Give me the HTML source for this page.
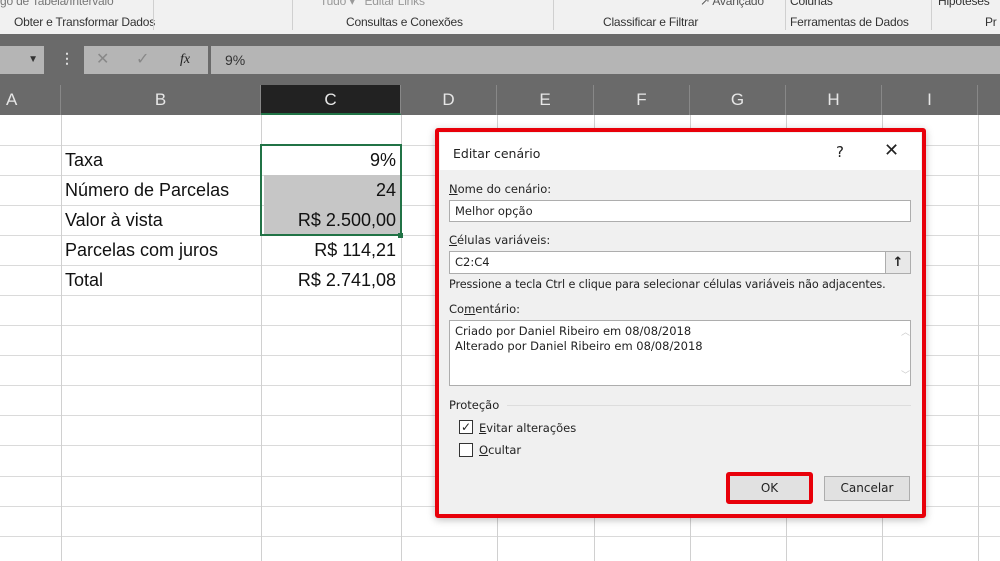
<!DOCTYPE html>
<html><head><meta charset="utf-8"><style>
*{margin:0;padding:0;box-sizing:border-box}
body{width:1000px;height:561px;overflow:hidden;position:relative;background:#fff;font-family:"Liberation Sans",sans-serif}
.a{position:absolute}
.rib{left:0;top:0;width:1000px;height:34px;background:#f1f1f1;font-size:12px;color:#333}
.rib span{position:absolute;top:15px;letter-spacing:-0.2px}
.vl{position:absolute;width:1px;background:#d0d0d0}
.hl{position:absolute;height:1px;background:#dadada;left:0;width:1000px}
.colh{position:absolute;top:85px;height:30px;color:#e6e6e6;font-size:17px;text-align:center;line-height:30px;border-right:1px solid #888}
.cell{position:absolute;font-size:18px;color:#111;height:30px;line-height:30px}
.dlg{font-family:"DejaVu Sans","Liberation Sans",sans-serif;font-size:11.5px;color:#222}
</style></head><body>
<div class="a rib">
<span style="left:0;top:-6px;color:#777">go de Tabela/Intervalo</span>
<span style="left:14px">Obter e Transformar Dados</span>
<span style="left:320px;top:-6px;color:#999">Tudo ▾ &nbsp; Editar Links</span>
<span style="left:346px">Consultas e Conexões</span>
<span style="left:603px">Classificar e Filtrar</span>
<span style="left:700px;top:-6px;color:#555">↗ Avançado</span>
<span style="left:790px;top:-6px">Colunas</span>
<span style="left:790px">Ferramentas de Dados</span>
<span style="left:938px;top:-6px">Hipóteses</span>
<span style="left:985px">Pr</span>
<div class="vl" style="left:153px;top:0;height:30px"></div>
<div class="vl" style="left:292px;top:0;height:30px"></div>
<div class="vl" style="left:553px;top:0;height:30px"></div>
<div class="vl" style="left:785px;top:0;height:30px"></div>
<div class="vl" style="left:931px;top:0;height:30px"></div>
</div>
<div class="a" style="left:0;top:34px;width:1000px;height:51px;background:#6a6a6a"></div>
<div class="a" style="left:0;top:46px;width:44px;height:28px;background:#b5b5b5;font-size:10px;color:#333;text-align:right;padding-right:6px;line-height:28px">▼</div>
<div class="a" style="left:60px;top:50px;color:#ddd;font-size:14px;font-weight:bold">⋮</div>
<div class="a" style="left:84px;top:46px;width:124px;height:28px;background:#b5b5b5;color:#888;font-size:16px;line-height:28px"><span style="position:absolute;left:12px">✕</span><span style="position:absolute;left:52px">✓</span><span style="position:absolute;left:96px;color:#222;font-style:italic;font-family:'Liberation Serif',serif;font-size:14px">fx</span></div>
<div class="a" style="left:211px;top:46px;width:789px;height:28px;background:#b5b5b5;font-size:14px;color:#333;line-height:28px;padding-left:14px">9%</div>
<div class="a" style="left:0;top:85px;width:1000px;height:30px;background:#6a6a6a"></div>
<div class="colh" style="left:0;width:61px;text-align:left;padding-left:6px">A</div>
<div class="colh" style="left:61px;width:200px">B</div>
<div class="colh" style="left:261px;width:140px;background:#222;border-bottom:2px solid #217346">C</div>
<div class="colh" style="left:401px;width:96px">D</div>
<div class="colh" style="left:497px;width:97px">E</div>
<div class="colh" style="left:594px;width:96px">F</div>
<div class="colh" style="left:690px;width:96px">G</div>
<div class="colh" style="left:786px;width:96px">H</div>
<div class="colh" style="left:882px;width:96px">I</div>
<div class="hl" style="top:145px"></div><div class="hl" style="top:175px"></div><div class="hl" style="top:205px"></div><div class="hl" style="top:235px"></div><div class="hl" style="top:265px"></div><div class="hl" style="top:295px"></div><div class="hl" style="top:325px"></div><div class="hl" style="top:355px"></div><div class="hl" style="top:385px"></div><div class="hl" style="top:415px"></div><div class="hl" style="top:445px"></div><div class="hl" style="top:476px"></div><div class="hl" style="top:506px"></div><div class="hl" style="top:536px"></div>
<div class="vl" style="left:61px;top:115px;height:446px"></div><div class="vl" style="left:261px;top:115px;height:446px"></div><div class="vl" style="left:401px;top:115px;height:446px"></div><div class="vl" style="left:497px;top:115px;height:446px"></div><div class="vl" style="left:594px;top:115px;height:446px"></div><div class="vl" style="left:690px;top:115px;height:446px"></div><div class="vl" style="left:786px;top:115px;height:446px"></div><div class="vl" style="left:882px;top:115px;height:446px"></div><div class="vl" style="left:978px;top:115px;height:446px"></div>
<div class="a" style="left:264px;top:175px;width:136px;height:60px;background:#c6c6c6"></div>
<div class="a" style="left:260px;top:144px;width:142px;height:92px;border:2px solid #217346"></div>
<div class="a" style="left:398px;top:233px;width:5px;height:5px;background:#217346"></div>
<div class="cell" style="left:65px;top:145px">Taxa</div>
<div class="cell" style="left:65px;top:175px">Número de Parcelas</div>
<div class="cell" style="left:65px;top:205px">Valor à vista</div>
<div class="cell" style="left:65px;top:235px">Parcelas com juros</div>
<div class="cell" style="left:65px;top:265px">Total</div>
<div class="cell" style="right:604px;top:145px">9%</div>
<div class="cell" style="right:604px;top:175px">24</div>
<div class="cell" style="right:604px;top:205px">R$ 2.500,00</div>
<div class="cell" style="right:604px;top:235px">R$ 114,21</div>
<div class="cell" style="right:604px;top:265px">R$ 2.741,08</div>
<div class="a dlg" style="left:435px;top:128px;width:491px;height:390px;border:4px solid #e8000a;border-radius:3px;background:#f0f0f0;box-shadow:0 2px 8px rgba(0,0,0,.25)">
 <div class="a" style="left:1px;top:1px;right:1px;height:37px;background:#fff"></div>
 <div class="a" style="left:14px;top:14px;font-size:12.5px">Editar cenário</div>
 <div class="a" style="left:397px;top:11px;font-size:15px">?</div>
 <div class="a" style="left:445px;top:8px;font-size:18px">✕</div>
 <div class="a" style="left:10px;top:50px"><u>N</u>ome do cenário:</div>
 <div class="a" style="left:10px;top:68px;width:462px;height:22px;background:#fff;border:1px solid #adadad;padding:3px 5px">Melhor opção</div>
 <div class="a" style="left:10px;top:101px"><u>C</u>élulas variáveis:</div>
 <div class="a" style="left:10px;top:119px;width:462px;height:23px;background:#fff;border:1px solid #adadad;padding:3px 5px">C2:C4</div>
 <div class="a" style="left:446px;top:120px;width:25px;height:21px;background:#e8e8e8;border-left:1px solid #adadad;text-align:center;font-weight:bold;font-size:13px;line-height:21px">↑</div>
 <div class="a" style="left:10px;top:146px;font-size:11.2px;letter-spacing:-0.1px;white-space:nowrap">Pressione a tecla Ctrl e clique para selecionar células variáveis não adjacentes.</div>
 <div class="a" style="left:10px;top:170px">Co<u>m</u>entário:</div>
 <div class="a" style="left:10px;top:188px;width:462px;height:66px;background:#fff;border:1px solid #adadad;padding:3px 5px;line-height:15px">Criado por Daniel Ribeiro em 08/08/2018<br>Alterado por Daniel Ribeiro em 08/08/2018</div>
 <div class="a" style="left:462px;top:193px;color:#ccc;font-size:9px">︿</div>
 <div class="a" style="left:462px;top:236px;color:#ccc;font-size:9px">﹀</div>
 <div class="a" style="left:10px;top:266px">Proteção</div>
 <div class="a" style="left:68px;top:273px;width:404px;height:1px;background:#ddd"></div>
 <div class="a" style="left:20px;top:288px;width:14px;height:14px;border:1px solid #333;background:#fff;font-size:12px;line-height:12px;text-align:center">✓</div>
 <div class="a" style="left:40px;top:289px"><u>E</u>vitar alterações</div>
 <div class="a" style="left:20px;top:311px;width:14px;height:14px;border:1px solid #333;background:#fff"></div>
 <div class="a" style="left:40px;top:311px"><u>O</u>cultar</div>
 <div class="a" style="left:287px;top:340px;width:87px;height:32px;border:4px solid #e8000a;border-radius:3px;background:#e1e1e1;text-align:center;line-height:24px;font-size:12px">OK</div>
 <div class="a" style="left:385px;top:344px;width:86px;height:25px;border:1px solid #adadad;background:#e1e1e1;text-align:center;line-height:23px;font-size:12px">Cancelar</div>
</div>
</body></html>
